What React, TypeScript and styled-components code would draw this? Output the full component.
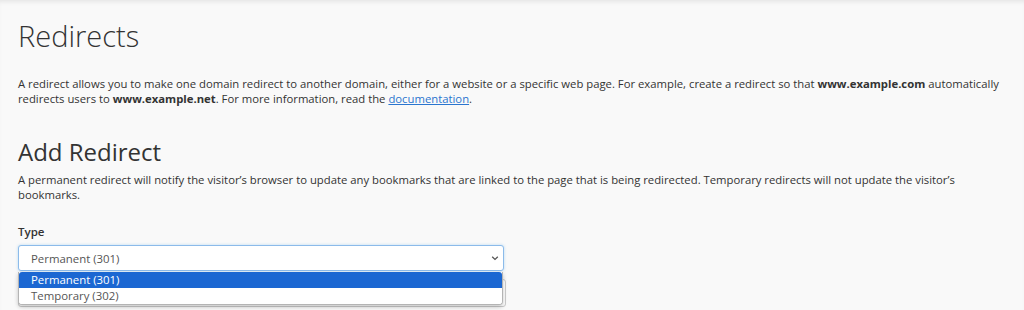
import React from "react";
import styled, { createGlobalStyle } from "styled-components";

const Global = createGlobalStyle`
  html, body { margin: 0; padding: 0; background: #f9f9f9; }
  body { font-family: "Open Sans", "Liberation Sans", sans-serif; color: #333; }
`;

const Page = styled.div`
  position: relative;
  min-height: 310px;
  padding: 0 18px;
  box-shadow: inset 0 4px 4px -2px rgba(0, 0, 0, 0.08);
  overflow: hidden;
`;

const Title = styled.h1`
  margin: 0;
  padding-top: 16px;
  font-size: 29px;
  font-weight: 300;
  line-height: 40px;
  color: #333;
`;

const Para = styled.p<{ $mt: number }>`
  margin: ${(p) => p.$mt}px 0 0;
  font-size: 11.3px;
  line-height: 14.5px;
  color: #333;
  b { font-weight: 700; }
  a { color: #2a75cf; text-decoration: underline; }
`;

const SubTitle = styled.h2`
  margin: 30px 0 0;
  font-size: 24px;
  font-weight: 400;
  line-height: 32px;
  color: #333;
`;

const Field = styled.div`
  position: relative;
  margin-top: 22px;
  width: 486px;
`;

const Label = styled.label`
  display: block;
  font-size: 11.5px;
  font-weight: 600;
  line-height: 16px;
  color: #333;
  margin-bottom: 5px;
`;

const SelectBox = styled.div`
  height: 24px;
  box-sizing: content-box;
  border: 1px solid #8cbbea;
  border-radius: 3px;
  background: #fff;
  box-shadow: 0 0 3px rgba(102, 175, 233, 0.45);
  display: flex;
  align-items: center;
  justify-content: space-between;
  padding: 0 3px 0 12px;
  font-size: 11.4px;
  color: #555;
`;

const List = styled.div`
  position: absolute;
  left: 0;
  right: 1px;
  top: 48px;
  background: #fff;
  border: 1px solid #b4b4b4;
  border-top: none;
  border-radius: 0 0 4px 4px;
  box-shadow: 0 2px 4px rgba(0, 0, 0, 0.22);
  overflow: hidden;
  z-index: 2;
`;

const Option = styled.div<{ $sel?: boolean }>`
  height: 16px;
  line-height: 16px;
  padding: 0 0 0 12px;
  font-size: 11.4px;
  background: ${(p) => (p.$sel ? "#1b67d2" : "#fff")};
  color: ${(p) => (p.$sel ? "#fff" : "#555")};
  ${(p) => (p.$sel ? "border-radius: 3px 3px 0 0;" : "")}
`;

const NextBox = styled.div`
  margin-top: 8px;
  height: 26px;
  border: 1px solid #ccc;
  border-radius: 3px;
  background: #fff;
  width: 486px;
`;

const Chevron = () => (
  <svg width="10" height="10" viewBox="0 0 10 10">
    <path d="M2.2 3.8 L5 6.4 L7.8 3.8" fill="none" stroke="#555" strokeWidth="1.3" />
  </svg>
);

export default function App() {
  return (
    <>
      <Global />
      <Page>
        <Title>Redirects</Title>
        <Para $mt={21}>
          A redirect allows you to make one domain redirect to another domain, either for a website or a specific web page. For example, create a redirect so that <b>www.example.com</b> automatically redirects users to <b>www.example.net</b>. For more information, read the <a href="#">documentation</a>.
        </Para>
        <SubTitle>Add Redirect</SubTitle>
        <Para $mt={5}>
          A permanent redirect will notify the visitor’s browser to update any bookmarks that are linked to the page that is being redirected. Temporary redirects will not update the visitor’s bookmarks.
        </Para>
        <Field>
          <Label>Type</Label>
          <SelectBox>
            <span>Permanent (301)</span>
            <Chevron />
          </SelectBox>
          <List>
            <Option $sel>Permanent (301)</Option>
            <Option>Temporary (302)</Option>
          </List>
          <NextBox />
        </Field>
      </Page>
    </>
  );
}
